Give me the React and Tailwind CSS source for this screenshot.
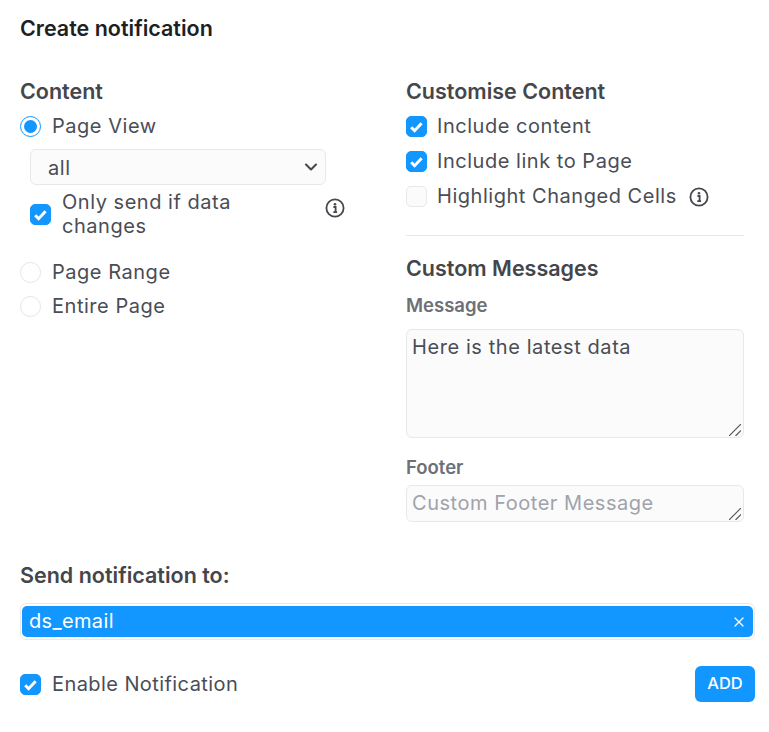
import React from "react";
import { ChevronDown, X } from "lucide-react";

const Check = () => (
  <svg viewBox="0 0 21 21" className="h-[21px] w-[21px] shrink-0">
    <path d="M5.2 11.2l3.4 3.5 7-7.4" fill="none" stroke="#fff" strokeWidth="3" />
  </svg>
);

const Checkbox = ({ checked }) => (
  <span
    className={`flex h-[21px] w-[21px] shrink-0 items-center justify-center overflow-hidden rounded-[5px] border ${
      checked ? "border-[#1296ff] bg-[#1296ff]" : "border-[#e8e8ea] bg-[#fbfbfb]"
    }`}
  >
    {checked && <Check />}
  </span>
);

const Radio = ({ checked }) => (
  <span
    className={`flex h-[21px] w-[21px] shrink-0 items-center justify-center rounded-full border bg-white ${
      checked ? "border-[#1296ff]" : "border-[#e5e5e7]"
    }`}
  >
    {checked && <span className="h-[13px] w-[13px] rounded-full bg-[#1296ff]" />}
  </span>
);

const Info = () => (
  <svg viewBox="0 0 20 20" className="h-5 w-5 shrink-0 text-[#45474d]">
    <circle cx="10" cy="10" r="8.6" fill="none" stroke="currentColor" strokeWidth="1.8" />
    <circle cx="10" cy="6.2" r="1.3" fill="currentColor" />
    <path d="M8.4 9h2.2v5M8.3 14.2h3.8" fill="none" stroke="currentColor" strokeWidth="1.8" />
  </svg>
);

const Grip = () => (
  <svg viewBox="0 0 12 12" className="pointer-events-none absolute bottom-[2px] right-[3px] h-3 w-3 text-[#55575c]">
    <path d="M0 12L12 0M6.5 12L12 6.5" fill="none" stroke="currentColor" strokeWidth="1.2" />
  </svg>
);

const Row = ({ control, children, wide }) => (
  <div className={`flex h-[21px] items-center ${wide ? "gap-[11px]" : "gap-[10px]"}`}>
    {control}
    <span className="whitespace-nowrap">{children}</span>
  </div>
);

const Heading = ({ children }) => (
  <h2 className="pb-[2px] text-[21.5px] font-semibold leading-[23px] tracking-normal text-[#44464b]">{children}</h2>
);

const Label = ({ children }) => (
  <div className="pb-[2px] text-[18.5px] font-semibold leading-[20px] tracking-normal text-[#6d7076]">{children}</div>
);

export default function App() {
  return (
    <div className="h-[732px] w-[769px] overflow-hidden bg-white pl-5 pr-[14px] pt-[16px] font-['Inter',sans-serif] text-[20px] leading-[25px] tracking-[0.53px] text-[#4a4d55]">
      <h1 className="text-[21.5px] font-semibold leading-[25px] tracking-normal text-[#1d1f24]">Create notification</h1>

      <div className="mt-[39px] grid grid-cols-[386px_338px]">
        <div>
          <Heading>Content</Heading>
          <div className="mt-[11px]">
            <Row wide control={<Radio checked />}>Page View</Row>
          </div>
          <div className="relative ml-[10px] mt-[12px] w-[296px]">
            <select className="h-9 w-full appearance-none rounded-[6px] border border-[#e8e8ea] bg-[#fbfbfb] pl-[17px] pt-[2px] text-[20px] text-[#4a4d55] outline-none">
              <option>all</option>
            </select>
            <ChevronDown className="pointer-events-none absolute right-[5px] top-[8px] h-[20px] w-[20px] text-[#45474d]" strokeWidth={2.5} />
          </div>
          <div className="ml-[10px] mt-[5px] flex w-[315px] items-center gap-[11px]">
            <Checkbox checked />
            <span className="w-[200px] leading-[24px]">Only send if data changes</span>
            <span className="-mt-[12px] ml-auto">
              <Info />
            </span>
          </div>
          <div className="mt-[24px]">
            <Row wide control={<Radio />}>Page Range</Row>
          </div>
          <div className="mt-[13px]">
            <Row wide control={<Radio />}>Entire Page</Row>
          </div>
        </div>

        <div>
          <Heading>Customise Content</Heading>
          <div className="mt-[11px] flex flex-col gap-[14px]">
            <Row control={<Checkbox checked />}>Include content</Row>
            <Row control={<Checkbox checked />}>Include link to Page</Row>
            <div className="flex items-center gap-[12px]">
              <Row control={<Checkbox />}>Highlight Changed Cells</Row>
              <Info />
            </div>
          </div>
          <div className="mt-[28px] border-t border-[#e8e8ea]" />
          <div className="mt-[21px]">
            <Heading>Custom Messages</Heading>
          </div>
          <div className="mt-[13px]">
            <Label>Message</Label>
          </div>
          <div className="relative mt-[12px]">
            <textarea
              className="block h-[109px] w-full resize-none rounded-[6px] border border-[#e8e8ea] bg-[#fbfbfb] px-[5px] pt-[5px] text-[20px] leading-[25px] tracking-[0.58px] text-[#4a4d55] outline-none"
              defaultValue="Here is the latest data"
            />
            <Grip />
          </div>
          <div className="mt-[19px]">
            <Label>Footer</Label>
          </div>
          <div className="relative mt-[6px]">
            <textarea
              className="block h-[37px] w-full resize-none rounded-[6px] border border-[#e8e8ea] bg-[#fbfbfb] px-[5px] pt-[5px] text-[20px] leading-[25px] tracking-[0.53px] outline-none placeholder:text-[#a0a3ab]"
              placeholder="Custom Footer Message"
            />
            <Grip />
          </div>
        </div>
      </div>

      <div className="mt-[42px]">
        <Heading>Send notification to:</Heading>
      </div>
      <div className="mt-[14px] rounded-[6px] border border-[#e8e8ea] bg-white px-[1px] py-[2px]">
        <div className="flex h-[31px] items-center justify-between rounded-[5px] bg-[#1296ff] pl-[7px] pr-[6px] text-white">
          <span className="tracking-[0.35px]">ds_email</span>
          <X className="h-[16px] w-[16px]" strokeWidth={1.8} />
        </div>
      </div>
      <div className="mt-[26px] flex items-center justify-between">
        <div className="tracking-[0.42px]">
          <Row wide control={<Checkbox checked />}>Enable Notification</Row>
        </div>
        <button className="h-9 w-[60px] rounded-[6px] bg-[#1296ff] pb-[2px] text-[16.5px] font-medium tracking-normal text-white">ADD</button>
      </div>
    </div>
  );
}
